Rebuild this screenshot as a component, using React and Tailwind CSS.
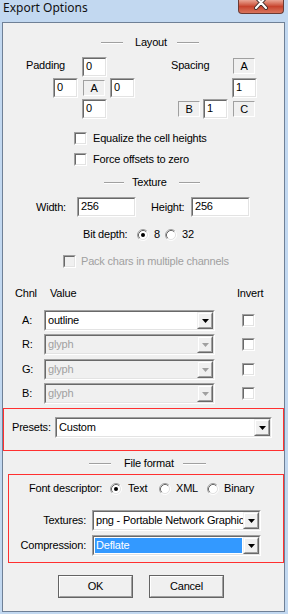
import React from "react";

const sunkOuter = "border border-t-[#a0a0a0] border-l-[#a0a0a0] border-r-white border-b-white";
const sunkInner = "border border-t-[#696969] border-l-[#696969] border-r-[#e3e3e3] border-b-[#e3e3e3]";

function Edit({ w, children }) {
  return (
    <div className={`${w} h-[20px] shrink-0 ${sunkOuter}`}>
      <div className={`h-full ${sunkInner} bg-white pl-[2px] leading-[14px] text-black`}>{children}</div>
    </div>
  );
}

function SBox({ children, className = "" }) {
  return (
    <div className={`w-[22px] h-[16px] shrink-0 border border-t-[#a0a0a0] border-l-[#a0a0a0] border-r-white border-b-white flex items-center justify-center leading-[13px] ${className}`}>
      {children}
    </div>
  );
}

function Check({ disabled }) {
  return (
    <div className={`w-[13px] h-[13px] shrink-0 ${sunkOuter}`}>
      <div className={`w-full h-full ${sunkInner} ${disabled ? "bg-[#f0f0f0]" : "bg-white"}`} />
    </div>
  );
}

function Radio({ on }) {
  return (
    <svg width="12" height="12" viewBox="0 0 12 12" className="shrink-0">
      <circle cx="6" cy="6" r="4.5" fill="#ffffff" />
      <path d="M2.11 9.89 A5.5 5.5 0 0 1 9.89 2.11" fill="none" stroke="#a0a0a0" strokeWidth="1" />
      <path d="M9.89 2.11 A5.5 5.5 0 0 1 2.11 9.89" fill="none" stroke="#ffffff" strokeWidth="1" />
      <path d="M2.82 9.18 A4.5 4.5 0 0 1 9.18 2.82" fill="none" stroke="#696969" strokeWidth="1" />
      <path d="M9.18 2.82 A4.5 4.5 0 0 1 2.82 9.18" fill="none" stroke="#e3e3e3" strokeWidth="1" />
      {on && <circle cx="6" cy="6" r="2" fill="#000000" />}
    </svg>
  );
}

function DropBtn({ disabled }) {
  return (
    <div className="w-[16px] h-full shrink-0 border border-t-[#f0f0f0] border-l-[#f0f0f0] border-r-[#696969] border-b-[#696969]">
      <div className="w-full h-full border border-t-white border-l-white border-r-[#a0a0a0] border-b-[#a0a0a0] bg-[#f0f0f0] flex items-center justify-center">
        <svg width="7" height="4" viewBox="0 0 7 4">
          <polygon points="0,0 7,0 3.5,4" fill={disabled ? "#a0a0a0" : "#000000"} />
        </svg>
      </div>
    </div>
  );
}

function Combo({ w, text, disabled, hl }) {
  return (
    <div className={`${w} h-[21px] shrink-0 ${sunkOuter}`}>
      <div className={`h-full ${sunkInner} flex ${disabled ? "bg-[#f0f0f0]" : "bg-white"}`}>
        {hl ? (
          <div className="flex-1 min-w-0 m-[1px] bg-[#3399ff] text-white pl-[1px] leading-[15px] whitespace-nowrap overflow-hidden">{text}</div>
        ) : (
          <div className={`flex-1 min-w-0 pl-[2px] leading-[17px] whitespace-nowrap overflow-hidden ${disabled ? "text-[#a0a0a0]" : "text-black"}`}>{text}</div>
        )}
        <DropBtn disabled={disabled} />
      </div>
    </div>
  );
}

function Line({ w }) {
  return <div className={`${w} h-[2px] border-t border-t-[#a0a0a0] border-b border-b-white`} />;
}

function Btn({ children }) {
  return (
    <div className="w-[75px] h-[23px] border border-[#646464]">
      <div className="w-full h-full border border-t-white border-l-white border-r-[#a0a0a0] border-b-[#a0a0a0] bg-[#f0f0f0] flex items-center justify-center leading-[13px]">
        {children}
      </div>
    </div>
  );
}

export default function App() {
  return (
    <div className="w-[288px] h-[614px] bg-[#c2d8f0] flex flex-col overflow-hidden font-['Liberation_Sans',Arial,sans-serif] text-[11px] tracking-[-0.2px] text-black">
      {/* Title bar */}
      <div className="h-[22px] flex items-start shrink-0">
        <div className="pl-[3px] font-['Noto_Sans',sans-serif] text-[12px] leading-[16px] tracking-normal text-[#111]">Export Options</div>
        <div className="ml-auto mr-[4px] w-[46px] h-[14px] rounded-b-[4px] border border-t-0 border-[#6b3a33] bg-linear-to-b from-[#e9a595] via-[#c7432d] to-[#d9745c] overflow-hidden flex justify-center">
          <svg width="14" height="14" viewBox="0 0 14 14" className="-mt-[4px]">
            <path d="M2 1 L12 12 M12 1 L2 12" stroke="#3b2a2a" strokeWidth="4" strokeLinecap="round" />
            <path d="M2 1 L12 12 M12 1 L2 12" stroke="#ffffff" strokeWidth="2.2" strokeLinecap="round" />
          </svg>
        </div>
      </div>

      <div className="flex">
        <div className="w-[2px] shrink-0" />
        <div className="w-[283px] h-[590px] shrink-0 border border-[#6f8096] bg-[#f0f0f0] flex flex-col overflow-hidden leading-[13px]">
          {/* Layout heading */}
          <div className="mt-[13px] h-[13px] flex items-center pl-[98px]">
            <Line w="w-[22px]" />
            <span className="ml-[12px] whitespace-nowrap">Layout</span>
            <div className="ml-[10px]"><Line w="w-[22px]" /></div>
          </div>

          {/* Padding / Spacing */}
          <div className="mt-[8px] flex flex-col gap-[1px]">
            <div className="h-[20px] flex items-start">
              <div className="w-[79px] pl-[23px] mt-[2px] shrink-0">Padding</div>
              <Edit w="w-[25px]">0</Edit>
              <div className="ml-[64px] w-[62px] mt-[2px] shrink-0">Spacing</div>
              <SBox className="mt-[1px]">A</SBox>
            </div>
            <div className="h-[20px] flex items-start">
              <div className="ml-[50px]"><Edit w="w-[25px]">0</Edit></div>
              <SBox className="ml-[5px] mt-[2px]">A</SBox>
              <div className="ml-[5px]"><Edit w="w-[25px]">0</Edit></div>
              <div className="ml-[97px]"><Edit w="w-[25px]">1</Edit></div>
            </div>
            <div className="h-[20px] flex items-start">
              <div className="ml-[79px]"><Edit w="w-[25px]">0</Edit></div>
              <SBox className="ml-[71px] mt-[2px]">B</SBox>
              <div className="ml-[3px]"><Edit w="w-[25px]">1</Edit></div>
              <SBox className="ml-[5px] mt-[2px]">C</SBox>
            </div>
          </div>

          {/* Checkboxes */}
          <div className="mt-[13px] h-[13px] flex items-center pl-[71px]">
            <Check />
            <span className="ml-[6px] whitespace-nowrap">Equalize the cell heights</span>
          </div>
          <div className="mt-[8px] h-[13px] flex items-center pl-[71px]">
            <Check />
            <span className="ml-[6px] whitespace-nowrap">Force offsets to zero</span>
          </div>

          {/* Texture heading */}
          <div className="mt-[10px] h-[13px] flex items-center pl-[101px]">
            <Line w="w-[20px]" />
            <span className="ml-[8px] whitespace-nowrap">Texture</span>
            <div className="ml-[12px]"><Line w="w-[21px]" /></div>
          </div>

          {/* Width / Height */}
          <div className="mt-[8px] h-[20px] flex items-center">
            <div className="ml-[33px] w-[41px] shrink-0">Width:</div>
            <Edit w="w-[59px]">256</Edit>
            <div className="ml-[15px] w-[40px] shrink-0">Height:</div>
            <Edit w="w-[59px]">256</Edit>
          </div>

          {/* Bit depth */}
          <div className="mt-[11px] h-[13px] flex items-center">
            <div className="ml-[80px] w-[54px] shrink-0">Bit depth:</div>
            <Radio on />
            <div className="ml-[5px] w-[11px] shrink-0">8</div>
            <Radio />
            <div className="ml-[5px]">32</div>
          </div>

          {/* Pack */}
          <div className="mt-[14px] h-[13px] flex items-center pl-[60px]">
            <Check disabled />
            <span className="ml-[5px] whitespace-nowrap text-[#a0a0a0]">Pack chars in multiple channels</span>
          </div>

          {/* Channel header */}
          <div className="mt-[19px] h-[13px] flex items-center">
            <div className="ml-[12px] w-[35px] shrink-0">Chnl</div>
            <div className="w-[187px] shrink-0">Value</div>
            <div>Invert</div>
          </div>

          {/* Channel rows */}
          <div className="mt-[10px] flex flex-col">
            {[
              ["A:", "outline", false, "mt-0"],
              ["R:", "glyph", true, "mt-[3px]"],
              ["G:", "glyph", true, "mt-[4px]"],
              ["B:", "glyph", true, "mt-[3px]"],
            ].map(([l, v, d, m]) => (
              <div key={l} className={`h-[21px] flex items-center ${m}`}>
                <div className="ml-[19px] w-[22px] shrink-0">{l}</div>
                <Combo w="w-[171px]" text={v} disabled={d} />
                <div className="ml-[27px]"><Check /></div>
              </div>
            ))}
          </div>

          {/* Presets box */}
          <div className="mt-[4px] h-[43px] shrink-0 border border-[#ff3030] pt-[8px]">
            <div className="h-[21px] flex items-center">
              <div className="ml-[8px] w-[43px] shrink-0">Presets:</div>
              <Combo w="w-[217px]" text="Custom" />
            </div>
          </div>

          {/* File format heading */}
          <div className="mt-[6px] h-[13px] flex items-center pl-[86px]">
            <Line w="w-[22px]" />
            <span className="ml-[13px] whitespace-nowrap">File format</span>
            <div className="ml-[9px]"><Line w="w-[23px]" /></div>
          </div>

          {/* File format box */}
          <div className="mt-[4px] ml-[5px] h-[89px] shrink-0 border border-[#ff3030]">
            <div className="mt-[7px] h-[13px] flex items-center">
              <div className="ml-[20px] w-[81px] shrink-0 whitespace-nowrap">Font descriptor:</div>
              <Radio on />
              <div className="ml-[6px] w-[31px] shrink-0">Text</div>
              <Radio />
              <div className="ml-[5px] w-[31px] shrink-0">XML</div>
              <Radio />
              <div className="ml-[5px]">Binary</div>
            </div>
            <div className="mt-[15px] h-[21px] flex items-center">
              <div className="w-[77px] shrink-0 text-right">Textures:</div>
              <div className="ml-[6px]"><Combo w="w-[169px]" text="png - Portable Network Graphics" /></div>
            </div>
            <div className="mt-[4px] h-[21px] flex items-center">
              <div className="w-[77px] shrink-0 text-right">Compression:</div>
              <div className="ml-[6px]"><Combo w="w-[169px]" text="Deflate" hl /></div>
            </div>
          </div>

          {/* Buttons */}
          <div className="mt-[12px] flex">
            <div className="ml-[55px]"><Btn>OK</Btn></div>
            <div className="ml-[16px]"><Btn>Cancel</Btn></div>
          </div>
        </div>
      </div>
    </div>
  );
}
